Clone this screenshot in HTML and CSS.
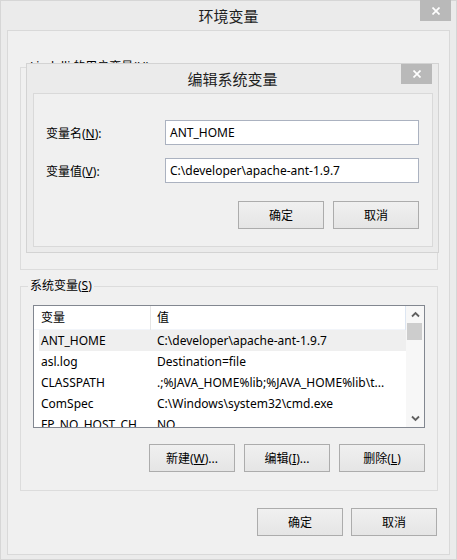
FILE: index.html
```html
<!DOCTYPE html>
<html lang="zh-CN">
<head>
    <meta charset="UTF-8">
    <title>环境变量</title>
    <link rel="stylesheet" href="styles.css">
</head>
<body>
    <div class="window">
        <div class="titlebar">
            <span class="title">环境变量</span>
            <button class="close" aria-label="关闭">
                <svg width="8" height="8" viewBox="0 0 8 8"><path d="M0.5 0.5 L7.5 7.5 M7.5 0.5 L0.5 7.5" stroke="#fff" stroke-width="1.7" fill="none"/></svg>
            </button>
        </div>

        <div class="client">
            <fieldset class="group group-user">
                <legend>Lindelli 的用户变量(<u>U</u>)</legend>
            </fieldset>

            <fieldset class="group group-sys">
                <legend>系统变量(<u>S</u>)</legend>
                <div class="listbox">
                    <div class="list">
                        <div class="list-head"><span>变量</span><span>值</span></div>
                        <div class="row selected"><span>ANT_HOME</span><span>C:\developer\apache-ant-1.9.7</span></div>
                        <div class="row"><span>asl.log</span><span>Destination=file</span></div>
                        <div class="row"><span>CLASSPATH</span><span>.;%JAVA_HOME%lib;%JAVA_HOME%lib\t...</span></div>
                        <div class="row"><span>ComSpec</span><span>C:\Windows\system32\cmd.exe</span></div>
                        <div class="row"><span>FP_NO_HOST_CH...</span><span>NO</span></div>
                    </div>
                    <div class="scrollbar">
                        <div class="arrow">
                            <svg width="9" height="7" viewBox="0 0 9 7"><path d="M1 5.5 L4.5 2 L8 5.5" stroke="#606060" stroke-width="1.8" fill="none"/></svg>
                        </div>
                        <div class="thumb"></div>
                        <div class="track"></div>
                        <div class="arrow">
                            <svg width="9" height="7" viewBox="0 0 9 7"><path d="M1 1.5 L4.5 5 L8 1.5" stroke="#606060" stroke-width="1.8" fill="none"/></svg>
                        </div>
                    </div>
                </div>
                <div class="actions actions-sys">
                    <button class="btn">新建(<u>W</u>)...</button>
                    <button class="btn">编辑(<u>I</u>)...</button>
                    <button class="btn">删除(<u>L</u>)</button>
                </div>
            </fieldset>

            <div class="actions actions-footer">
                <button class="btn">确定</button>
                <button class="btn">取消</button>
            </div>
        </div>

        <!-- edit dialog sits on top of the main window -->
        <div class="dialog">
            <div class="titlebar">
                <span class="title">编辑系统变量</span>
                <button class="close" aria-label="关闭">
                    <svg width="8" height="8" viewBox="0 0 8 8"><path d="M0.5 0.5 L7.5 7.5 M7.5 0.5 L0.5 7.5" stroke="#fff" stroke-width="1.7" fill="none"/></svg>
                </button>
            </div>
            <div class="dialog-client">
                <div class="form">
                    <label>变量名(<u>N</u>):</label>
                    <div class="field">ANT_HOME</div>
                    <label>变量值(<u>V</u>):</label>
                    <div class="field">C:\developer\apache-ant-1.9.7</div>
                </div>
                <div class="actions actions-dialog">
                    <button class="btn">确定</button>
                    <button class="btn">取消</button>
                </div>
            </div>
        </div>
    </div>
</body>
</html>
```

FILE: styles.css
```css
* {
    box-sizing: border-box;
}

body {
    margin: 0;
    font-family: "Noto Sans", "Noto Sans CJK SC", sans-serif;
    font-size: 12px;
    color: #000;
    background: #fff;
}

u {
    text-decoration: underline;
    text-underline-offset: 1px;
}

.window {
    position: relative;
    width: 457px;
    height: 560px;
    border: 1px solid #d6d6d6;
    background: #ebebeb;
    display: flex;
    flex-direction: column;
}

.titlebar {
    height: 29px;
    display: flex;
    align-items: center;
    justify-content: center;
    flex-shrink: 0;
}

.title {
    font-size: 15px;
    line-height: 20px;
    color: #1e1e1e;
}

.close {
    position: absolute;
    top: -1px;
    right: 5px;
    width: 31px;
    height: 21px;
    padding: 0;
    border: none;
    background: #b9b9b9;
    display: flex;
    align-items: center;
    justify-content: center;
}

.client {
    flex: 1;
    margin: 0 6px 4px;
    border: 1px solid #d9d9d9;
    background: #f0f0f0;
    padding: 28px 12px 0 12px;
    display: flex;
    flex-direction: column;
}

.group {
    margin: 0 -1px 0 0;
    min-width: 0;
    border: 1px solid #dcdcdc;
    padding: 11px 12px 18px 12px;
}

.group legend {
    padding: 0 2px;
    margin-left: -5px;
    line-height: 16px;
    font-size: 12px;
}

.group-user {
    height: 211px;
}

.group-sys {
    margin-top: 8px;
}

.listbox {
    height: 123px;
    border: 1px solid #828790;
    background: #fff;
    display: flex;
    overflow: hidden;
}

.list {
    flex: 1;
    overflow: hidden;
}

.list-head {
    display: grid;
    grid-template-columns: 117px 1fr;
    height: 24px;
    line-height: 24px;
    border-bottom: 1px solid #f2f5fa;
}

.list-head span:first-child {
    padding-left: 7px;
    border-right: 1px solid #e5e5e5;
}

.list-head span:last-child {
    padding-left: 6px;
    border-right: 1px solid #dde6f2;
}

.row {
    display: grid;
    grid-template-columns: 112px 1fr;
    height: 21px;
    line-height: 21px;
    margin-left: 5px;
    white-space: nowrap;
}

.row span {
    overflow: hidden;
}

.row span:first-child {
    padding-left: 2px;
}

.row span:last-child {
    padding-left: 6px;
}

.row.selected {
    background: #efefef;
}

.scrollbar {
    width: 18px;
    background: #f7f7f7;
    display: flex;
    flex-direction: column;
}

.arrow {
    height: 17px;
    display: flex;
    align-items: center;
    justify-content: center;
}

.thumb {
    height: 17px;
    width: 15px;
    margin-left: 1px;
    background: #cdcdcd;
}

.track {
    flex: 1;
}

.actions {
    display: flex;
    justify-content: flex-end;
    gap: 8px;
}

.actions-sys {
    margin-top: 16px;
    gap: 9px;
}

.actions-footer {
    margin-top: 17px;
}

.actions-dialog {
    margin-top: 18px;
    gap: 9px;
}

.btn {
    width: 86px;
    height: 28px;
    padding: 0;
    border: 1px solid #acacac;
    background: linear-gradient(#f0f0f0, #e5e5e5);
    font-family: inherit;
    font-size: 12px;
    color: #000;
}

.dialog {
    position: absolute;
    left: 25px;
    top: 62px;
    width: 413px;
    height: 190px;
    border: 1px solid #d3d3d3;
    background: #ebebeb;
    display: flex;
    flex-direction: column;
}

.dialog .close {
    top: 0;
    right: 6px;
    height: 20px;
}

.dialog-client {
    flex: 1;
    margin: 0 5px 5px 6px;
    border: 1px solid #d9d9d9;
    background: #f0f0f0;
    padding: 26px 13px 16px 12px;
}

.form {
    display: grid;
    grid-template-columns: 119px 1fr;
    row-gap: 13px;
    align-items: center;
}

.field {
    height: 25px;
    line-height: 23px;
    border: 1px solid #abb2c0;
    background: #fff;
    padding-left: 4px;
    white-space: nowrap;
}
```
